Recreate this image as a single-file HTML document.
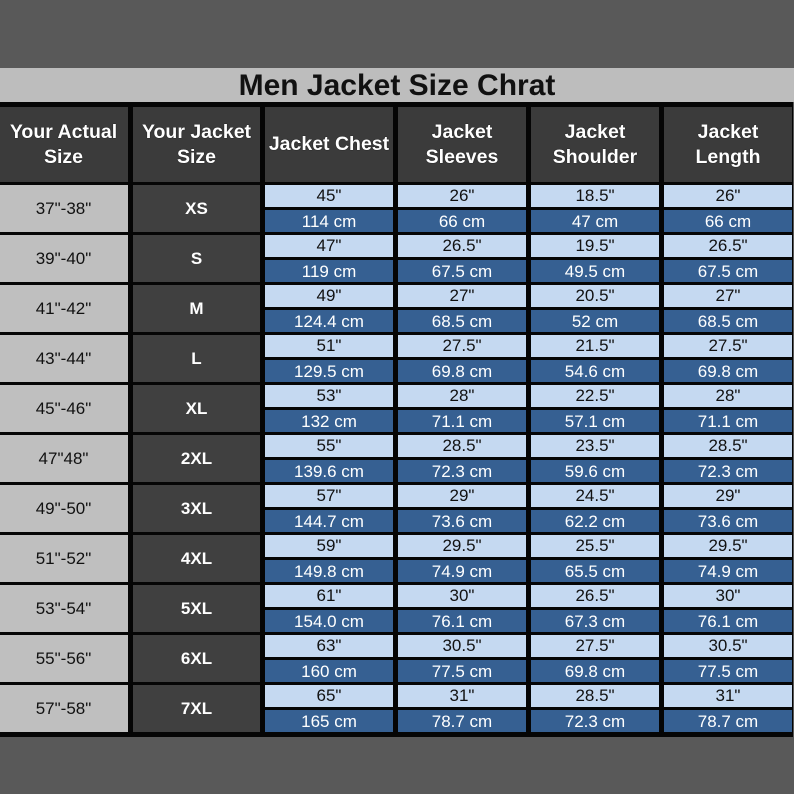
<!DOCTYPE html>
<html><head><meta charset="utf-8"><style>
body{margin:0;width:794px;height:794px;background:#595959;position:relative;overflow:hidden;font-family:"Liberation Sans",Arial,sans-serif}
.title{position:absolute;top:68px;left:0;width:794px;height:34px;background:#bdbdbd;text-align:center;font-weight:bold;font-size:30px;line-height:36px;color:#111}
.tbl{position:absolute;top:102px;left:0;width:794px;height:635px;background:#050505;box-sizing:border-box;padding-top:5px;display:grid;
grid-template-columns:129px 127px 128px 128px 128px 128px;column-gap:5px;grid-template-rows:75px repeat(22,22px);row-gap:3px;margin-left:-1px;padding-left:0}
.h{background:#3b3b3b;color:#fff;font-weight:bold;font-size:19.5px;display:flex;align-items:center;justify-content:center;text-align:center;line-height:25px;text-shadow:0 0 1px #000}
.a{grid-row:span 2;background:#bfbfbf;color:#111;font-size:17px;display:flex;align-items:center;justify-content:center}
.s{grid-row:span 2;background:#404040;color:#fff;font-weight:bold;font-size:17px;display:flex;align-items:center;justify-content:center}
.l{background:#c5d9f1;color:#111;font-size:17px;text-align:center;line-height:22px}
.d{background:#366092;color:#fff;font-size:17px;text-align:center;line-height:23px}
</style></head><body>
<div class="title">Men Jacket Size Chrat</div>
<div class="tbl" id="t">
<div class="h">Your Actual<br>Size</div><div class="h">Your Jacket<br>Size</div><div class="h">Jacket Chest</div><div class="h">Jacket<br>Sleeves</div><div class="h">Jacket<br>Shoulder</div><div class="h">Jacket<br>Length</div>

<div class="a">37"-38"</div><div class="s">XS</div><div class="l">45"</div><div class="l">26"</div><div class="l">18.5"</div><div class="l">26"</div>
<div class="d">114 cm</div><div class="d">66 cm</div><div class="d">47 cm</div><div class="d">66 cm</div>

<div class="a">39"-40"</div><div class="s">S</div><div class="l">47"</div><div class="l">26.5"</div><div class="l">19.5"</div><div class="l">26.5"</div>
<div class="d">119 cm</div><div class="d">67.5 cm</div><div class="d">49.5 cm</div><div class="d">67.5 cm</div>

<div class="a">41"-42"</div><div class="s">M</div><div class="l">49"</div><div class="l">27"</div><div class="l">20.5"</div><div class="l">27"</div>
<div class="d">124.4 cm</div><div class="d">68.5 cm</div><div class="d">52 cm</div><div class="d">68.5 cm</div>

<div class="a">43"-44"</div><div class="s">L</div><div class="l">51"</div><div class="l">27.5"</div><div class="l">21.5"</div><div class="l">27.5"</div>
<div class="d">129.5 cm</div><div class="d">69.8 cm</div><div class="d">54.6 cm</div><div class="d">69.8 cm</div>

<div class="a">45"-46"</div><div class="s">XL</div><div class="l">53"</div><div class="l">28"</div><div class="l">22.5"</div><div class="l">28"</div>
<div class="d">132 cm</div><div class="d">71.1 cm</div><div class="d">57.1 cm</div><div class="d">71.1 cm</div>

<div class="a">47"48"</div><div class="s">2XL</div><div class="l">55"</div><div class="l">28.5"</div><div class="l">23.5"</div><div class="l">28.5"</div>
<div class="d">139.6 cm</div><div class="d">72.3 cm</div><div class="d">59.6 cm</div><div class="d">72.3 cm</div>

<div class="a">49"-50"</div><div class="s">3XL</div><div class="l">57"</div><div class="l">29"</div><div class="l">24.5"</div><div class="l">29"</div>
<div class="d">144.7 cm</div><div class="d">73.6 cm</div><div class="d">62.2 cm</div><div class="d">73.6 cm</div>

<div class="a">51"-52"</div><div class="s">4XL</div><div class="l">59"</div><div class="l">29.5"</div><div class="l">25.5"</div><div class="l">29.5"</div>
<div class="d">149.8 cm</div><div class="d">74.9 cm</div><div class="d">65.5 cm</div><div class="d">74.9 cm</div>

<div class="a">53"-54"</div><div class="s">5XL</div><div class="l">61"</div><div class="l">30"</div><div class="l">26.5"</div><div class="l">30"</div>
<div class="d">154.0 cm</div><div class="d">76.1 cm</div><div class="d">67.3 cm</div><div class="d">76.1 cm</div>

<div class="a">55"-56"</div><div class="s">6XL</div><div class="l">63"</div><div class="l">30.5"</div><div class="l">27.5"</div><div class="l">30.5"</div>
<div class="d">160 cm</div><div class="d">77.5 cm</div><div class="d">69.8 cm</div><div class="d">77.5 cm</div>

<div class="a">57"-58"</div><div class="s">7XL</div><div class="l">65"</div><div class="l">31"</div><div class="l">28.5"</div><div class="l">31"</div>
<div class="d">165 cm</div><div class="d">78.7 cm</div><div class="d">72.3 cm</div><div class="d">78.7 cm</div>
</div>
</body></html>
